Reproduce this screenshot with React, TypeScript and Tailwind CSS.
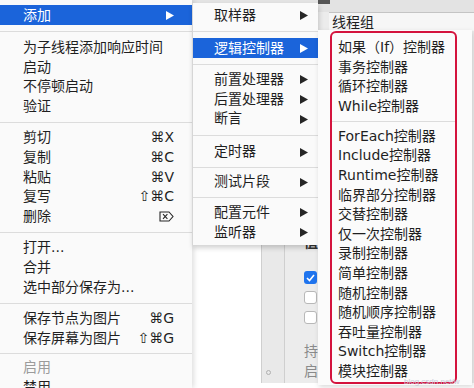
import React from 'react';

const FONT = "font-['DejaVu_Sans','Noto_Sans_CJK_SC',sans-serif]";

type Entry =
  | { sep: string }
  | {
      label: string;
      keys?: React.ReactNode;
      arrow?: boolean;
      active?: boolean;
      disabled?: boolean;
    };

function Arrow({ white }: { white?: boolean }) {
  return (
    <svg width="8" height="9" viewBox="0 0 8 9" className={white ? 'fill-white' : 'fill-[#262626]'}>
      <path d="M0 0 L8 4.5 L0 9 Z" />
    </svg>
  );
}

function DeleteKey() {
  return (
    <svg width="15" height="11" viewBox="0 0 15 11" fill="none" stroke="#262626" strokeWidth="1.1">
      <path d="M1 1 H10 L14 5.5 L10 10 H1 Z" />
      <path d="M4 3.2 L8.4 7.8 M8.4 3.2 L4 7.8" />
    </svg>
  );
}

function Sep({ h }: { h: string }) {
  return (
    <div className={`flex items-center ${h}`}>
      <div className="h-px w-full bg-[#dcdcdc]" />
    </div>
  );
}

function Menu({ entries, pl, pr }: { entries: Entry[]; pl: string; pr: string }) {
  return (
    <>
      {entries.map((e, i) => {
        if ('sep' in e) return <Sep key={i} h={e.sep} />;
        return (
          <div
            key={i}
            className={`flex items-center justify-between ${pl} ${pr} ${
              e.active ? 'h-[20px] bg-[#1b64da] leading-[20px] text-white' : 'h-[19.6px] leading-[19.6px]'
            } ${e.disabled ? 'text-[#9b9b9b]' : e.active ? '' : 'text-[#1f1f1f]'}`}
          >
            <span className="whitespace-nowrap">{e.label}</span>
            {e.arrow && <Arrow white={e.active} />}
            {e.keys && <span className="flex items-center whitespace-nowrap">{e.keys}</span>}
          </div>
        );
      })}
    </>
  );
}

const mainMenu: Entry[] = [
  { label: '添加', arrow: true, active: true },
  { sep: 'h-[13px]' },
  { label: '为子线程添加响应时间' },
  { label: '启动' },
  { label: '不停顿启动' },
  { label: '验证' },
  { sep: 'h-[12px]' },
  { label: '剪切', keys: '⌘X' },
  { label: '复制', keys: '⌘C' },
  { label: '粘贴', keys: '⌘V' },
  { label: '复写', keys: '⇧⌘C' },
  { label: '删除', keys: <DeleteKey /> },
  { sep: 'h-[12px]' },
  { label: '打开...' },
  { label: '合并' },
  { label: '选中部分保存为...' },
  { sep: 'h-[12px]' },
  { label: '保存节点为图片', keys: '⌘G' },
  { label: '保存屏幕为图片', keys: '⇧⌘G' },
  { sep: 'h-[10px]' },
  { label: '启用', disabled: true },
  { label: '禁用' },
];

const addMenu: Entry[] = [
  { label: '取样器', arrow: true },
  { sep: 'h-[12.5px]' },
  { label: '逻辑控制器', arrow: true, active: true },
  { sep: 'h-[12px]' },
  { label: '前置处理器', arrow: true },
  { label: '后置处理器', arrow: true },
  { label: '断言', arrow: true },
  { sep: 'h-[13.5px]' },
  { label: '定时器', arrow: true },
  { sep: 'h-[10.5px]' },
  { label: '测试片段', arrow: true },
  { sep: 'h-[11px]' },
  { label: '配置元件', arrow: true },
  { label: '监听器', arrow: true },
];

const controllers1 = ['如果（If）控制器', '事务控制器', '循环控制器', 'While控制器'];
const controllers2 = [
  'ForEach控制器',
  'Include控制器',
  'Runtime控制器',
  '临界部分控制器',
  '交替控制器',
  '仅一次控制器',
  '录制控制器',
  '简单控制器',
  '随机控制器',
  '随机顺序控制器',
  '吞吐量控制器',
  'Switch控制器',
  '模块控制器',
];

function Box({ checked }: { checked?: boolean }) {
  return checked ? (
    <div className="flex h-[13px] w-[13px] items-center justify-center rounded-[3px] bg-[#1f74ee]">
      <svg width="9" height="8" viewBox="0 0 9 8" fill="none" stroke="white" strokeWidth="1.6">
        <path d="M1 4 L3.5 6.5 L8 1" />
      </svg>
    </div>
  ) : (
    <div className="h-[13px] w-[13px] rounded-[3px] border border-[#b8b8b8] bg-white" />
  );
}

export default function App() {
  return (
    <div className={`relative h-[388px] w-[474px] overflow-hidden bg-white text-[14px] ${FONT}`}>
      {/* app behind the menus */}
      <div className="flex h-[383px] flex-col bg-[#ececec]">
        <div className="flex h-[12px] bg-[#e3e3e3]">
          <div className="w-[318px]" />
          <div className="h-[4px] w-[12px] bg-[#555]" />
        </div>
        <div className="flex flex-1">
          <div className="w-[262px] border-r border-[#cfcfcf] bg-white" />
          <div className="flex w-[23px] flex-col justify-end border-r border-[#cfcfcf] bg-[#e9e9e9] pb-[8px] pl-[4px]">
            <div className="h-[5px] w-[5px] rounded-full border border-[#b0b0b0]" />
          </div>
          <div className="flex flex-1 flex-col">
            <div className="ml-[44px] flex h-[19px] items-center border-t border-[#c4c4c4] bg-[#f6f6f6] pl-[3px] leading-[18px] text-[#1f1f1f]">
              线程组
            </div>
            <div className="mt-[203px] pl-[19px] text-[14px] font-bold leading-[16px] text-[#333]">值</div>
            <div className="mt-[21px] flex flex-col gap-[7px] pl-[19px]">
              <Box checked />
              <Box />
              <Box />
            </div>
            <div className="mt-[17px] pl-[19px] leading-[20px] text-[#8a8a8a]">持</div>
            <div className="pl-[19px] leading-[20px] text-[#8a8a8a]">启</div>
          </div>
        </div>
      </div>

      {/* main context menu */}
      <div className="absolute left-0 top-0 h-[388px] w-[192px] bg-[#fafafa] pt-[5px] shadow-[2px_0_5px_rgba(0,0,0,0.13)]">
        <Menu entries={mainMenu} pl="pl-[23px]" pr="pr-[18px]" />
      </div>

      {/* 添加 submenu */}
      <div className="absolute left-[192px] top-[3px] w-[126px] border-l border-[#d6d6d6] bg-[#fafafa] pb-[3px] pt-[3px] shadow-[1px_3px_5px_rgba(0,0,0,0.18)]">
        <Menu entries={addMenu} pl="pl-[21px]" pr="pr-[10px]" />
      </div>

      {/* 逻辑控制器 submenu */}
      <div className="absolute left-[318px] top-[30px] h-[355px] w-[154px] bg-[#fbfbfb] pl-[12px] pt-[1px] text-[#1f1f1f] shadow-[1px_2px_5px_rgba(0,0,0,0.15)]">
        <div className="w-[127px] rounded-[6px] border-2 border-[#d4133d] pb-[1px] pl-[6px] pt-[5px]">
          {controllers1.map((c) => (
            <div key={c} className="flex h-[19.6px] items-center whitespace-nowrap leading-[19.6px]">
              {c}
            </div>
          ))}
          <div className="-ml-[6px] flex h-[10.4px] items-center">
            <div className="h-px w-full bg-[#dcdcdc]" />
          </div>
          {controllers2.map((c) => (
            <div key={c} className="flex h-[19.6px] items-center whitespace-nowrap leading-[19.6px]">
              {c}
            </div>
          ))}
        </div>
      </div>

      <span className="absolute left-[404px] top-[377px] font-['Liberation_Sans',sans-serif] text-[8px] leading-[10px] text-[#c8c8d8]">
        blog.csdn.net/w
      </span>
    </div>
  );
}
